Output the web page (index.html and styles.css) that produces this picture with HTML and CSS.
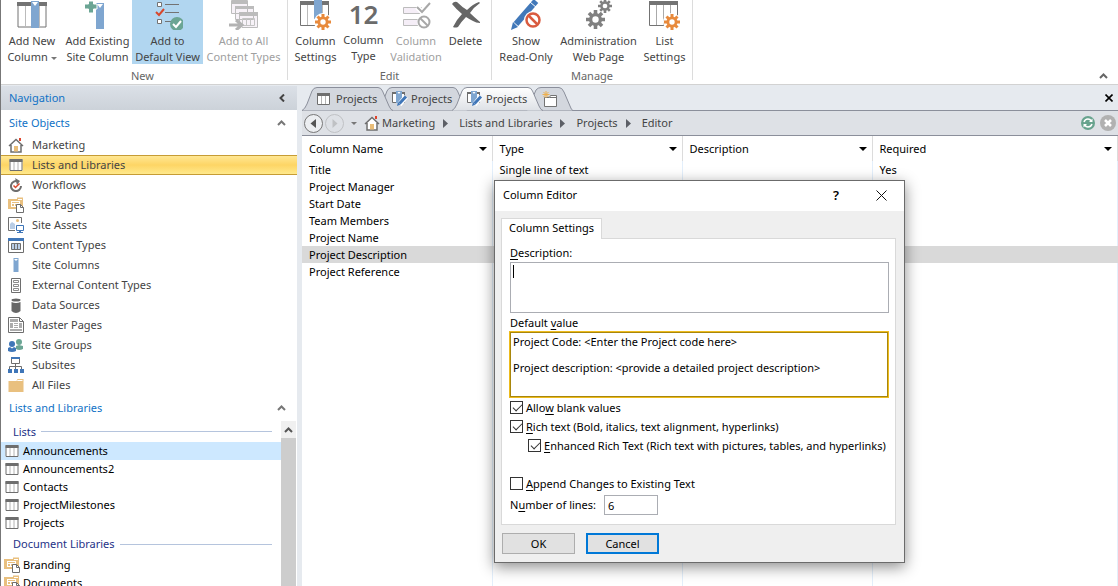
FILE: index.html
```html
<!DOCTYPE html>
<html lang="en">
<head>
<meta charset="utf-8">
<title>Column Editor</title>
<link rel="stylesheet" href="styles.css">
</head>
<body>
<svg class="defs" aria-hidden="true">
  <symbol id="i-list" viewBox="0 0 13 12"><path fill="#fff" d="M0 0h13v12H0z"/><path fill="#6e6e6e" d="M0 0h13v3H0z"/><path fill="none" stroke="#6e6e6e" d="M.5.5h12v11H.5z"/><path stroke="#b4b4b4" d="M4.500 3v8M8.500 3v8"/></symbol>
  <symbol id="i-home" viewBox="0 0 16 15"><path fill="#fff" d="M8 2 2.500 7.500V14h11V7.500z"/><path fill="#e0442c" d="M11 0h2v3h-2z"/><path fill="none" stroke="#6e6e6e" stroke-width="1.500" d="M1 8 8 1.500 15 8M3 7v7h10V7"/><path fill="#e9bd78" d="M6 8h4v5.500H6z"/></symbol>
  <symbol id="i-pages" viewBox="0 0 16 16"><path fill="#e9c07f" d="M0 2h9V.500h6V12H0z"/><path fill="#fff" d="M10 2h4v1h-4zM3 4h9v6H3z"/><path fill="#e9c07f" d="M4 5h7v1H4zM4 7h2v2H4zM7 7h3v2H7z"/><path fill="#fff" stroke="#6e6e6e" d="M8.500 7.500h4l3 3v5h-7z"/><path fill="none" stroke="#6e6e6e" d="M12.500 7.500v3h3"/></symbol>
  <symbol id="i-chev" viewBox="0 0 9 6"><path fill="none" stroke="currentColor" stroke-width="2" d="M1 5 4.500 1.500 8 5"/></symbol>
  <symbol id="i-gear" viewBox="0 0 16 16"><path stroke="currentColor" stroke-width="3" d="M8 0v16M0 8h16M2.500 2.500l11 11M13.500 2.500l-11 11"/><circle cx="8" cy="8" r="5.500" fill="currentColor"/><circle cx="8" cy="8" r="2.700" fill="#fff"/></symbol>
  <symbol id="i-edit" viewBox="0 0 16 15"><path fill="#fff" stroke="#6e6e6e" d="M.5 2.500h12v9H.5z"/><path fill="#6e6e6e" d="M0 1h13v2H0z"/><path fill="#7fa6d0" d="M4 0h6v12H4z"/><path fill="#fff" d="M5.500 1h3L7 3z"/><path stroke="#fff" stroke-width="5" d="m7.500 13.500 6.500-8"/><path stroke="#3f76b8" stroke-width="3" d="m7.500 12.500 6.500-7"/><path fill="#3f76b8" d="m5 15 1-4 2.500 2.500z"/></symbol>
  <symbol id="i-tri" viewBox="0 0 5 9"><path fill="#5c5f66" d="M0 0l5 4.500L0 9z"/></symbol>
  <symbol id="i-down" viewBox="0 0 8 4"><path fill="currentColor" d="M0 0h8L4 4z"/></symbol>
  <symbol id="i-tab" viewBox="0 0 91 25" preserveAspectRatio="none"><path d="M0 24.500Q3 23 5 18L10 5Q11.500 1.500 15 1.500H76Q79 1.500 80.500 5L87 20Q89 24.500 91 24.500"/></symbol>
  <linearGradient id="g-tab" x1="0" y1="0" x2="0" y2="1"><stop offset="0" stop-color="#fff"/><stop offset="1" stop-color="#dee1e6"/></linearGradient>
</svg>

<header class="ribbon">
  <section class="group">
    <div class="tools">
      <button class="tool w62"><svg width="30" height="28" viewBox="0 0 30 28"><path fill="#fff" stroke="#737373" d="M1 2h28v24H1z"/><path fill="#737373" d="M0 1h30v4H0z"/><path stroke="#bbb" d="M8.500 5v20M22.500 5v20"/><path fill="#7fa6d0" d="M14 0h8v27h-8z"/><path fill="#fff" d="M15 1h6l-3 4z"/></svg><span>Add New<br>Column <svg class="mini" width="6" height="3"><use href="#i-down"/></svg></span></button>
      <button class="tool w68"><svg width="30" height="28" viewBox="0 0 30 28"><path fill="#7fa6d0" d="M13 2h8v26h-8z"/><path fill="#fff" d="M14 3h6l-3 4z"/><path fill="#6ba594" stroke="#fff" d="M5.500 0h5v3H14v5h-3.500v4h-5V8H1.500V3h4z"/></svg><span>Add Existing<br>Site Column</span></button>
      <button class="tool w71 active"><svg width="30" height="30" viewBox="0 0 30 30"><path fill="#fff" stroke="#737373" d="M4.500 2.500h4v4h-4zM4.500 19.500h4v4h-4z"/><path stroke="#737373" d="M12 4.500h14M12 12.500h14M12 21.500h7"/><path fill="none" stroke="#d8482d" stroke-width="2" d="m3 12 3 3 5-6"/><circle cx="24" cy="24" r="7" fill="#6ba594"/><path fill="none" stroke="#fff" stroke-width="2" d="m20 24 3 3 5-6"/></svg><span>Add to<br>Default View</span></button>
      <button class="tool w81" disabled><svg width="32" height="30" viewBox="0 0 32 30"><g fill="#f7f2f8" stroke="#bcbcbc"><path d="M3.500.5h16v13h-16zM7.500 6.500h18v13h-18zM11.500 12.500h18v15h-18z"/></g><path fill="#bcbcbc" d="M3 1h17v3H3zM7 6h19v3H7zM11 12h19v4H11z"/><path fill="none" stroke="#c4c4c4" d="M14.500 18.500h12v7h-12zM18.500 19v6M22.500 19v6"/><path stroke="#fff" stroke-width="6" d="M1 25h13"/><path fill="none" stroke="#b3b3b3" stroke-width="3" d="M1 25h12M8 20l6 5-6 5"/></svg><span>Add to All<br>Content Types</span></button>
    </div>
    <h2 class="group-name">New</h2>
  </section>
  <section class="group">
    <div class="tools">
      <button class="tool w47"><svg width="31" height="30" viewBox="0 0 31 30"><path fill="#fff" stroke="#737373" d="M.5 2.500h28v23H.5z"/><path fill="#737373" d="M0 1h29v4H0z"/><path stroke="#bbb" d="M7.500 5v20M22.500 5v20"/><path fill="#7fa6d0" d="M14 0h8v19h-8z"/><circle cx="23" cy="22" r="9" fill="#fff"/><svg x="15" y="14" width="16" height="16" color="#e88a3c"><use href="#i-gear"/></svg></svg><span>Column<br>Settings</span></button>
      <button class="tool w48"><b class="twelve">12</b><span>Column<br>Type</span></button>
      <button class="tool w56" disabled><svg width="29" height="28" viewBox="0 0 29 28"><path fill="#f5eef7" stroke="#bcbcbc" d="M1.500 6.500h18v6h-18zM1.500 18.500h18v6h-18z"/><path fill="none" stroke="#fff" stroke-width="5" d="m15 6 5 5 8-9"/><path fill="none" stroke="#a8a8a8" stroke-width="2" d="m15 6 5 5 8-9"/><circle cx="22" cy="21" r="7" fill="#fff"/><circle cx="22" cy="21" r="5.500" fill="#fff" stroke="#a8a8a8" stroke-width="2"/><path stroke="#a8a8a8" stroke-width="2" d="m18 17 8 8"/></svg><span>Column<br>Validation</span></button>
      <button class="tool w43"><svg width="30" height="28" viewBox="0 0 30 28"><path fill="#666" d="M1 3q2-3 5-2 5 5 10 8 6-6 12-8l1 1q-6 4-10 10 4 4 10 9v1q-4 0-7-2-4-2-7-4-5 5-8 10-3 1-5 0Q6 18 11 13 5 8 1 3z"/></svg><span>Delete</span></button>
    </div>
    <h2 class="group-name">Edit</h2>
  </section>
  <section class="group">
    <div class="tools">
      <button class="tool w58"><svg width="32" height="30" viewBox="0 0 32 30"><path stroke="#4178b9" stroke-width="6" d="M6 24 26 1"/><path stroke="#fff" d="m20 2 7 6"/><path fill="#4178b9" d="m1 30 2-8 5 5z"/><circle cx="23" cy="20" r="9" fill="#fff"/><circle cx="23" cy="20" r="6.500" fill="#fff" stroke="#d95b3f" stroke-width="2.500"/><path stroke="#d95b3f" stroke-width="2.500" d="m18.500 15.500 9 9"/></svg><span>Show<br>Read-Only</span></button>
      <button class="tool w85"><svg width="28" height="30" viewBox="0 0 28 30" color="#808080"><svg x="1" y="10" width="19" height="19"><use href="#i-gear"/></svg><svg x="13" y="-1" width="14" height="14"><use href="#i-gear"/></svg></svg><span>Administration<br>Web Page</span></button>
      <button class="tool w46"><svg width="31" height="30" viewBox="0 0 31 30"><path fill="#fff" stroke="#737373" d="M.5 2.500h28v23H.5z"/><path fill="#737373" d="M0 1h29v4H0z"/><path stroke="#aaa" d="M7.500 5v20M14.500 5v20M21.500 5v20"/><circle cx="23" cy="22" r="9" fill="#fff"/><svg x="15" y="14" width="16" height="16" color="#e88a3c"><use href="#i-gear"/></svg></svg><span>List<br>Settings</span></button>
    </div>
    <h2 class="group-name">Manage</h2>
  </section>
  <button class="collapse" aria-label="Collapse ribbon"><svg width="9" height="6"><use href="#i-chev"/></svg></button>
</header>

<div class="work">
  <aside class="side">
    <div class="nav-head"><span>Navigation</span><button aria-label="Hide navigation"><svg width="6" height="8" viewBox="0 0 6 8"><path fill="none" stroke="#444" stroke-width="2" d="M5 .5 1.500 4 5 7.500"/></svg></button></div>
    <div class="side-title"><span>Site Objects</span><svg width="9" height="6"><use href="#i-chev"/></svg></div>
    <nav class="objects">
      <a href="#"><svg width="16" height="15"><use href="#i-home"/></svg>Marketing</a>
      <a href="#" class="current"><svg width="13" height="12"><use href="#i-list"/></svg>Lists and Libraries</a>
      <a href="#"><svg width="14" height="14" viewBox="0 0 14 14"><path fill="none" stroke="#6e6e6e" stroke-width="2" d="M9 3.500A5 5 0 1 0 12 8"/><path fill="#6e6e6e" d="M6 0l5 3-3 4z"/><path fill="none" stroke="#d8482d" stroke-width="1.500" d="m4.500 7.500 2 2 4-4"/></svg>Workflows</a>
      <a href="#"><svg width="16" height="16"><use href="#i-pages"/></svg>Site Pages</a>
      <a href="#"><svg width="16" height="16" viewBox="0 0 16 16"><path fill="#fff" stroke="#6e6e6e" d="M.5.5h13v13H.5z"/><path fill="#b9cde5" d="M2 12V7l2-2 3 2 1 2v3z"/><circle cx="9.500" cy="3.500" r="1.500" fill="#e9bd78"/><path fill="#fff" d="M7 6h9v10H7z"/><path fill="#fff" stroke="#3f76b8" d="M8.500 8.500h7v5h-7z"/><path fill="#3f76b8" d="M11 14h2v1h2v1H9v-1h2z"/></svg>Site Assets</a>
      <a href="#"><svg width="16" height="15" viewBox="0 0 16 15"><path fill="#fff" stroke="#6e6e6e" d="M.5.5h15v14H.5z"/><path fill="#3f76b8" d="M0 0h16v3H0z"/><path fill="#b9cde5" stroke="#6e6e6e" d="M3.500 5.500h9v6h-9zM6.500 6v5M9.500 6v5"/></svg>Content Types</a>
      <a href="#"><svg width="5" height="14" viewBox="0 0 5 14"><path fill="#7fa6d0" d="M0 0h5v14H0z"/><path fill="#fff" d="M1 1h3v1H3v1H2V2H1z"/></svg>Site Columns</a>
      <a href="#"><svg width="10" height="15" viewBox="0 0 10 15"><path fill="#fff" stroke="#6e6e6e" d="M.5.5h9v14h-9z"/><path fill="none" stroke="#8c8c8c" d="M2.500 2.500h5v2h-5zM2.500 6.500h5v2h-5zM2.500 10.500h5v2h-5z"/></svg>External Content Types</a>
      <a href="#"><svg width="9" height="15" viewBox="0 0 9 15"><path fill="#666" d="M0 4q4.500 2 9 0v9q-4.500 4-9 0z"/><ellipse cx="4.500" cy="2" rx="4.500" ry="1.500" fill="#666"/></svg>Data Sources</a>
      <a href="#"><svg width="16" height="16" viewBox="0 0 16 16"><path fill="#fff" stroke="#6e6e6e" d="M.5.5h11l4 4v11H.5z"/><path fill="none" stroke="#6e6e6e" d="M11.500.5v4h4"/><path fill="#ababab" d="M2 2h8v3H2zM2 6h3v5H2zM11 6h3v5h-3zM2 12h12v2H2zM6 6h4v1H6zM6 8h4v1H6zM6 10h4v1H6z"/></svg>Master Pages</a>
      <a href="#"><svg width="16" height="13" viewBox="0 0 16 13"><circle cx="11" cy="3" r="3" fill="#6ba594"/><path fill="#6ba594" d="M8 10V7l3-1 4 1v3q-4 2-7 0z"/><circle cx="4" cy="5" r="3.500" fill="#fff"/><circle cx="4" cy="5" r="3" fill="#3f76b8"/><path fill="#3f76b8" d="M0 12V9l2-1 2 1.500L6 8l2 1v3q-4 2-8 0z"/></svg>Site Groups</a>
      <a href="#"><svg width="16" height="16" viewBox="0 0 16 16"><path fill="none" stroke="#6e6e6e" d="M7.500 7v6M1.500 12V9.500h12V12M3.500.5h8v6h-8z"/><path fill="#3f76b8" d="M3 0h9v2H3zM0 12h4v4H0zM6 12h4v4H6zM12 12h4v4h-4z"/></svg>Subsites</a>
      <a href="#"><svg width="15" height="13" viewBox="0 0 15 13"><path fill="#e9c07f" d="M0 2h8l1-2h6v13H0z"/><path fill="#fff" d="M9 1h5v1H8.500z"/></svg>All Files</a>
    </nav>
    <div class="side-title second"><span>Lists and Libraries</span><svg width="9" height="6"><use href="#i-chev"/></svg></div>
    <div class="tree">
      <div class="tree-body">
        <h3>Lists</h3>
        <a href="#" class="picked"><svg width="13" height="12"><use href="#i-list"/></svg>Announcements</a>
        <a href="#"><svg width="13" height="12"><use href="#i-list"/></svg>Announcements2</a>
        <a href="#"><svg width="13" height="12"><use href="#i-list"/></svg>Contacts</a>
        <a href="#"><svg width="13" height="12"><use href="#i-list"/></svg>ProjectMilestones</a>
        <a href="#"><svg width="13" height="12"><use href="#i-list"/></svg>Projects</a>
        <h3 class="docs">Document Libraries</h3>
        <a href="#"><svg width="16" height="16"><use href="#i-pages"/></svg>Branding</a>
        <a href="#"><svg width="16" height="16"><use href="#i-pages"/></svg>Documents</a>
      </div>
      <div class="scroll"><button aria-label="Scroll up"><svg width="9" height="6"><use href="#i-chev"/></svg></button><div class="thumb"></div></div>
    </div>
  </aside>

  <main class="main">
    <div class="tabs">
      <a href="#" class="tab first"><svg class="shape"><use href="#i-tab"/></svg><svg width="13" height="12"><use href="#i-list"/></svg><span>Projects</span></a>
      <a href="#" class="tab"><svg class="shape"><use href="#i-tab"/></svg><svg width="16" height="15"><use href="#i-edit"/></svg><span>Projects</span></a>
      <a href="#" class="tab front"><svg class="shape"><use href="#i-tab"/></svg><svg width="16" height="15"><use href="#i-edit"/></svg><span>Projects</span></a>
      <a href="#" class="tab new" aria-label="New tab"><svg class="shape" viewBox="0 0 46 25"><path d="M0 24.500 9 4Q11 1.500 14 1.500H32Q35 1.500 37 6L43 20Q44.500 24.500 46 24.500"/></svg><svg width="16" height="16" viewBox="0 0 16 16"><path fill="#fff" stroke="#737373" d="M2.500 6.500h5l1-2h6v11h-12z"/><path stroke="#737373" d="M8 6.500h6"/><path stroke="#eeb04e" d="M4 0v7M.5 3.500h7M1.500 1l5 5M6.500 1l-5 5"/></svg></a>
      <button class="close" aria-label="Close"><svg width="8" height="8" viewBox="0 0 8 8"><path stroke="#000" stroke-width="1.600" d="m.5.5 7 7M7.500.5l-7 7"/></svg></button>
    </div>
    <div class="crumbs">
      <button aria-label="Back"><svg width="19" height="19" viewBox="0 0 19 19"><circle cx="9.500" cy="9.500" r="9" fill="#eceef1" stroke="#777"/><path fill="#555" d="M12 5v9L6.500 9.500z"/></svg></button>
      <button aria-label="Forward"><svg width="19" height="19" viewBox="0 0 19 19"><circle cx="9.500" cy="9.500" r="9" fill="none" stroke="#bfc1c4"/><path fill="#bfc1c4" d="M7.500 5v9l5-4.500z"/></svg></button>
      <button class="hist" aria-label="History"><svg width="6" height="3"><use href="#i-down"/></svg></button>
      <svg width="16" height="15"><use href="#i-home"/></svg>
      <a href="#">Marketing</a><svg class="sep" width="5" height="9"><use href="#i-tri"/></svg>
      <a href="#">Lists and Libraries</a><svg class="sep" width="5" height="9"><use href="#i-tri"/></svg>
      <a href="#">Projects</a><svg class="sep" width="5" height="9"><use href="#i-tri"/></svg>
      <a href="#">Editor</a>
      <button class="refresh" aria-label="Refresh"><svg width="14" height="14" viewBox="0 0 14 14"><circle cx="7" cy="7" r="7" fill="#68a38e"/><path fill="none" stroke="#fff" stroke-width="1.500" d="M3 6q1-3 4-3 2 0 3.500 2M11 8q-1 3-4 3-2 0-3.500-2"/><path fill="#fff" d="M11.500 2.500V6H8zM2.500 11.500V8H6z"/></svg></button>
      <button aria-label="Stop"><svg width="16" height="16" viewBox="0 0 16 16"><circle cx="8" cy="8" r="8" fill="#b1b1b1"/><path stroke="#fff" stroke-width="2.500" d="m5 5 6 6M11 5l-6 6"/></svg></button>
    </div>
    <table class="grid">
      <colgroup><col class="c-fix"><col class="c-fix"><col class="c-fix"><col></colgroup>
      <thead><tr>
        <th><div>Column Name<svg width="8" height="4"><use href="#i-down"/></svg></div></th>
        <th><div>Type<svg width="8" height="4"><use href="#i-down"/></svg></div></th>
        <th><div>Description<svg width="8" height="4"><use href="#i-down"/></svg></div></th>
        <th><div>Required<svg width="8" height="4"><use href="#i-down"/></svg></div></th>
      </tr></thead>
      <tbody>
        <tr><td>Title</td><td>Single line of text</td><td></td><td>Yes</td></tr>
        <tr><td>Project Manager</td><td></td><td></td><td></td></tr>
        <tr><td>Start Date</td><td></td><td></td><td></td></tr>
        <tr><td>Team Members</td><td></td><td></td><td></td></tr>
        <tr><td>Project Name</td><td></td><td></td><td></td></tr>
        <tr class="selected"><td>Project Description</td><td></td><td></td><td></td></tr>
        <tr><td>Project Reference</td><td></td><td></td><td></td></tr>
        <tr class="fill"><td></td><td></td><td></td><td></td></tr>
      </tbody>
    </table>
  </main>
</div>

<div class="dialog" role="dialog" aria-labelledby="dlg-title">
  <div class="dlg-bar">
    <h1 id="dlg-title">Column Editor</h1>
    <button class="help" aria-label="Help">?</button>
    <button aria-label="Close dialog"><svg width="11" height="11" viewBox="0 0 11 11"><path stroke="#111" d="m.5.5 10 10M10.500.5l-10 10"/></svg></button>
  </div>
  <form class="dlg-body">
    <div class="dlg-tab">Column Settings</div>
    <div class="panel">
      <label for="desc"><u>D</u>escription:</label>
      <div class="field"><textarea id="desc"></textarea><i class="caret"></i></div>
      <label for="def">Default <u>v</u>alue</label>
      <textarea id="def" class="gold">Project Code: &lt;Enter the Project code here&gt;

Project description: &lt;provide a detailed project description&gt;</textarea>
      <label class="check"><input type="checkbox" checked><span>Allo<u>w</u> blank values</span></label>
      <label class="check"><input type="checkbox" checked><span><u>R</u>ich text (Bold, italics, text alignment, hyperlinks)</span></label>
      <label class="check inset"><input type="checkbox" checked><span><u>E</u>nhanced Rich Text (Rich text with pictures, tables, and hyperlinks)</span></label>
      <label class="check append"><input type="checkbox"><span><u>A</u>ppend Changes to Existing Text</span></label>
      <div class="lines"><label for="num">N<u>u</u>mber of lines:</label><input id="num" type="text" value="6"></div>
    </div>
    <div class="actions"><button type="button">OK</button><button type="button" class="default">Cancel</button></div>
  </form>
</div>
</body>
</html>
```
FILE: styles.css
```css
* { box-sizing: border-box; }
html, body { height: 100%; }
body {
  margin: 0;
  display: flex;
  flex-direction: column;
  overflow: hidden;
  position: relative;
  border-left: 1px solid #777;
  background: #fff;
  color: #000;
  font: 11px/16px "Noto Sans", "Open Sans", sans-serif;
}
button { margin: 0; padding: 0; border: 0; background: none; color: inherit; font: inherit; }
a { color: inherit; text-decoration: none; }
h1, h2, h3 { margin: 0; font: inherit; }
svg { flex: none; display: block; }
.defs { position: absolute; width: 0; height: 0; }

/* Ribbon */
.ribbon { display: flex; flex: none; border-bottom: 1px solid #d2d2d2; }
.group { padding: 0 4px; border-right: 1px solid #dcdcdc; margin-bottom: 4px; }
.group:first-child { padding: 0 3px 0 0; }
.tools { display: flex; }
.tool {
  display: flex;
  flex-direction: column;
  align-items: center;
  height: 64px;
  color: #444;
  white-space: nowrap;
}
.tool > svg { height: 33px; padding-bottom: 3px; }
.tool > span { display: block; }
.tool:disabled { color: #a0a0a0; }
.tool.active { background: #b1d6f0; }
.mini { display: inline-block; vertical-align: middle; color: #777; }
.twelve { height: 33px; font-size: 26px; line-height: 28px; color: #6b6b6b; font-weight: 600; }
.w62 { width: 62px; } .w68 { width: 69px; } .w71 { width: 71px; } .w81 { width: 81px; }
.w47 { width: 47px; } .w48 { width: 49px; } .w56 { width: 56px; } .w43 { width: 43px; }
.w58 { width: 60px; } .w85 { width: 85px; } .w46 { width: 47px; }
.group-name { text-align: center; color: #666; line-height: 16px; padding-top: 4px; margin-bottom: -4px; }
.collapse { align-self: flex-end; margin: 0 10px 5px auto; color: #666; }

.work { display: flex; flex: 1; min-height: 0; padding-top: 1px; background: #e6eaef; }

/* Sidebar */
.side { display: flex; flex-direction: column; width: 296px; background: #fff; color: #444; margin-right: 5px; flex: none; }
.nav-head, .side-title { display: flex; justify-content: space-between; align-items: center; flex: none; color: #1072c6; }
.nav-head { height: 24px; padding: 0 12px 0 8px; background: linear-gradient(#dbe0e7, #ccd2d9); }
.side-title { height: 25px; padding: 0 11px 0 8px; }
.side-title svg { color: #777; }
.side-title.second { height: 26px; }
.objects a { display: flex; align-items: center; height: 20px; padding-left: 31px; }
.objects a svg { width: 32px; margin-left: -32px; }
.objects .current { background: linear-gradient(#ffe793, #fdd565 50%, #ffe98c); border: solid #c69c35; border-width: 1px 0; }
.tree { display: flex; flex: 1; min-height: 0; overflow: hidden; color: #000; }
.tree-body { flex: 1; }
.tree h3 { display: flex; align-items: center; gap: 5px; height: 21px; padding: 0 9px 0 12px; color: #1e3287; }
.tree h3::after { content: ""; flex: 1; height: 1px; background: #b5c4dd; }
.tree h3.docs { height: 24px; }
.tree a { display: flex; align-items: center; height: 18px; padding-left: 22px; }
.tree a svg { width: 22px; margin-left: -22px; }
.tree .picked { background: #cde8ff; }
.scroll { display: flex; flex-direction: column; width: 15px; margin-right: 1px; background: #f0f0f0; }
.scroll button { height: 17px; display: flex; align-items: center; justify-content: center; color: #555; }
.thumb { flex: 1; background: #cdcdcd; }

/* Document area */
.main { display: flex; flex-direction: column; flex: 1; min-width: 0; color: #444; }
.tabs { display: flex; flex: none; height: 25px; position: relative; border-bottom: 1px solid #8b8f9b; }
.tab { display: flex; align-items: center; gap: 3px; width: 91px; height: 25px; padding-left: 15px; position: relative; margin-right: -16px; }
.tab > * { position: relative; }
.tab .shape { position: absolute; inset: 0; width: 100%; height: 100%; fill: #d3d7de; stroke: #8b8f9b; }
.tab.first, .tab.front { z-index: 1; }
.tab.first { gap: 6px; }
.tab.front .shape { fill: url(#g-tab); }
.tab.new { width: 46px; }
.close { margin: 0 5px 0 auto; }
.crumbs { display: flex; flex: none; align-items: center; height: 25px; padding: 0 2px; gap: 2px; background: #dee1e6; border-bottom: 1px solid #8b8f9b; }
.crumbs .hist { color: #777; margin: 0 5px; }
.crumbs .sep { margin: 0 9px 0 6px; }
.crumbs .refresh { margin: 0 3px 0 auto; }

.grid { flex: 1; width: 100%; table-layout: fixed; border-collapse: collapse; background: #fff; color: #000; }
.c-fix { width: 190px; }
.grid th, .grid td { height: 17px; padding: 0 0 0 7px; border-right: 1px solid #e3effb; font-weight: 400; text-align: left; line-height: 16px; white-space: nowrap; }
.grid th { height: 25px; border-color: #dcdcdc; }
.grid th div { display: flex; align-items: center; justify-content: space-between; padding-right: 5px; }
.grid .selected td { background: #d9d9d9; border-color: #d9d9d9; }
.grid .fill td { height: auto; }

/* Dialog */
.dialog { position: absolute; left: 493px; top: 180px; width: 411px; background: #efefef; border: 1px solid #6b6b6b; box-shadow: 0 4px 14px rgba(0, 0, 0, .45); z-index: 5; }
.dlg-bar { display: flex; align-items: center; height: 30px; padding: 0 17px 2px 8px; background: #fff; }
.dlg-bar h1 { flex: 1; }
.help { margin-right: 37px; font-size: 13px; font-weight: 600; }
.dlg-body { display: flex; flex-direction: column; padding: 7px 8px 8px 6px; }
.dlg-tab { align-self: flex-start; height: 21px; padding: 1px 7px 0; margin-bottom: -1px; background: #fff; border: 1px solid #d9d9d9; border-bottom: 0; position: relative; }
.panel { display: flex; flex-direction: column; background: #fff; border: 1px solid #d9d9d9; padding: 6px 6px 9px 8px; }
.panel u { text-underline-offset: 2px; }
.field { position: relative; display: flex; margin-bottom: 2px; }
textarea, #num { font: inherit; line-height: 13px; color: #000; background: #fff; border: 1px solid #abadb3; outline: 0; resize: none; border-radius: 0; overflow: hidden; }
textarea { flex: 1; height: 51px; padding: 4px 3px; }
.caret { position: absolute; left: 3px; top: 3px; width: 1px; height: 13px; background: #000; }
textarea.gold { flex: none; height: 67px; margin: -1px 0 0 -1px; padding: 3px; border: 1px solid #eebc1d; box-shadow: inset 0 0 0 1px #a8860c; }
.panel > label:not(.check) { height: 17px; }
.check { display: flex; align-items: center; gap: 3px; height: 19px; white-space: nowrap; }
.check input { appearance: none; flex: none; width: 13px; height: 13px; margin: 0; border: 1px solid #333; background: #fff; }
.check input:checked::after { content: ""; display: block; width: 8px; height: 4px; margin: 2px 0 0 2px; border: solid #333; border-width: 0 0 1px 1px; transform: rotate(-45deg); }
.inset { margin-left: 18px; }
.append { margin-top: 19px; }
.lines { display: flex; align-items: center; gap: 8px; margin-top: 2px; }
#num { width: 54px; height: 20px; padding: 0 3px; }
.actions { display: flex; gap: 11px; padding: 8px 0 0 1px; }
.actions button { width: 73px; height: 21px; background: #e1e1e1; border: 1px solid #adadad; }
.actions .default { border: 2px solid #0078d7; }
```
